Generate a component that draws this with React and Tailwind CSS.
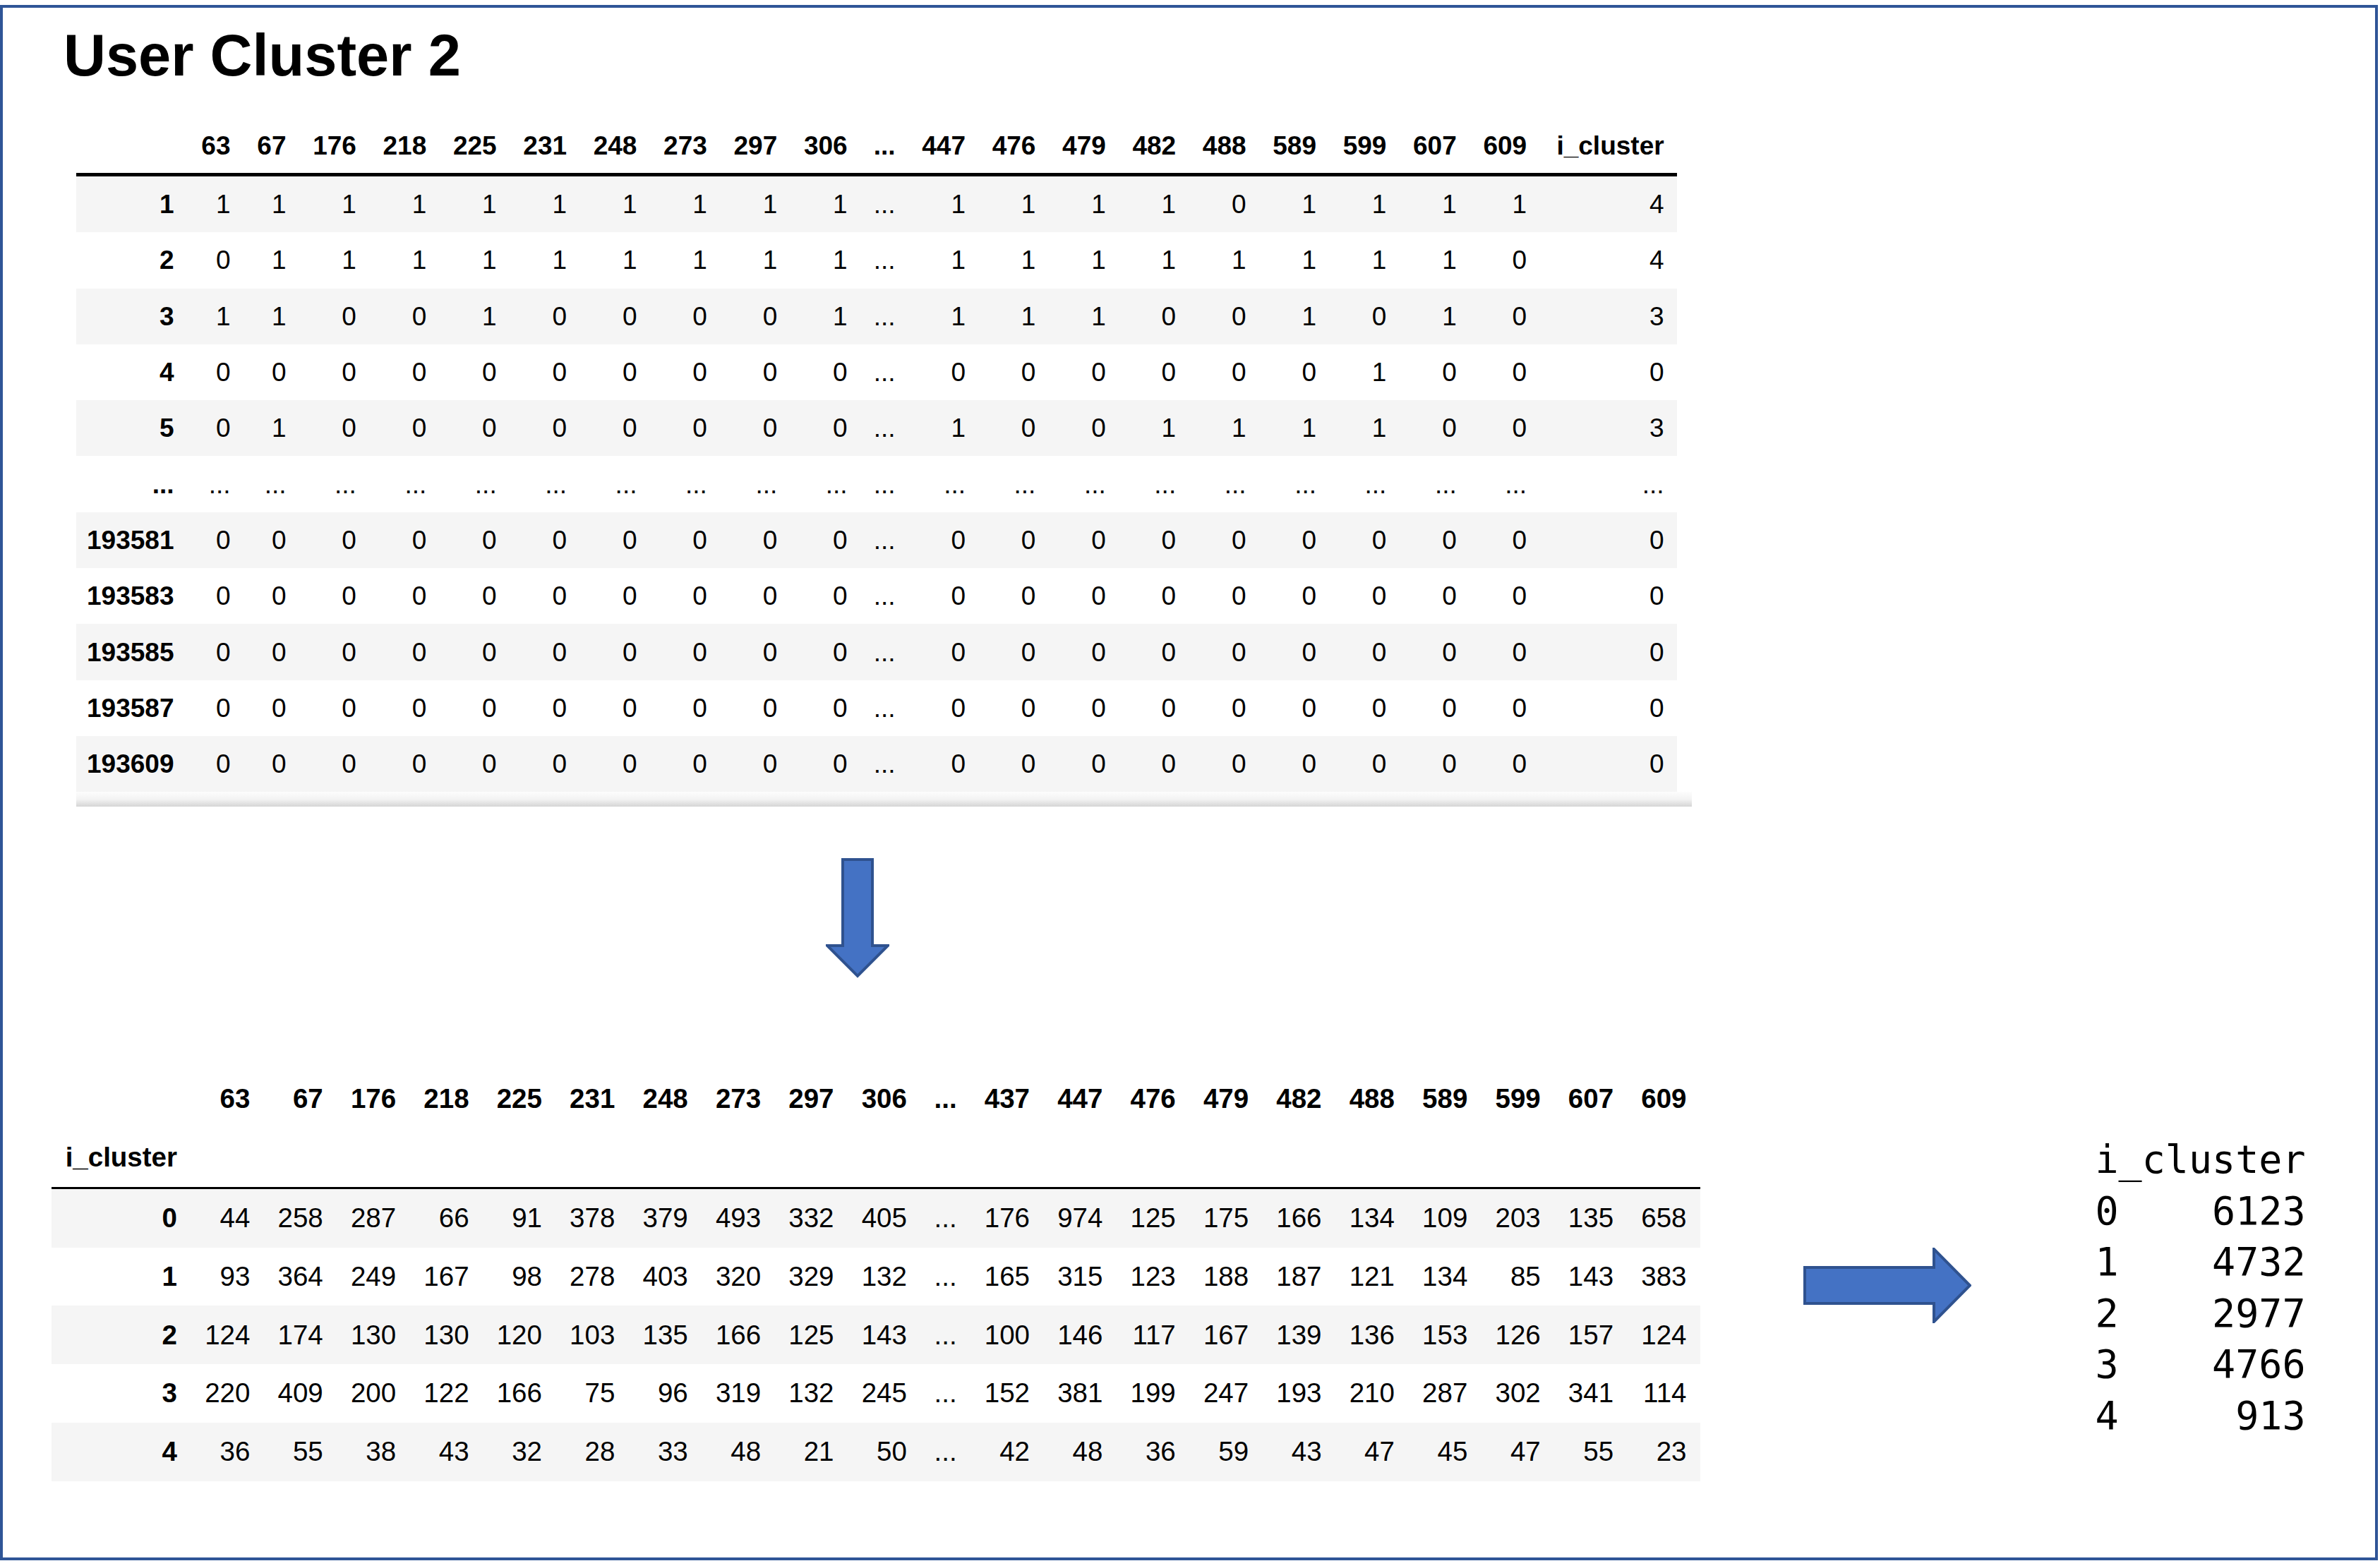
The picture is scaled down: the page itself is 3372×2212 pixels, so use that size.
const T1 = "grid w-max grid-cols-[157px_80px_79px_repeat(8,99.4px)_68px_repeat(9,99.4px)_194.5px]";
const T2 = "grid w-max grid-cols-[197px_repeat(10,103.4px)_70.7px_repeat(10,103.4px)]";

const H1 = "63 67 176 218 225 231 248 273 297 306 ... 447 476 479 482 488 589 599 607 609 i_cluster".split(" ");
const R1 = [
  "1 1 1 1 1 1 1 1 1 1 1 ... 1 1 1 1 0 1 1 1 1 4",
  "2 0 1 1 1 1 1 1 1 1 1 ... 1 1 1 1 1 1 1 1 0 4",
  "3 1 1 0 0 1 0 0 0 0 1 ... 1 1 1 0 0 1 0 1 0 3",
  "4 0 0 0 0 0 0 0 0 0 0 ... 0 0 0 0 0 0 1 0 0 0",
  "5 0 1 0 0 0 0 0 0 0 0 ... 1 0 0 1 1 1 1 0 0 3",
  "... ... ... ... ... ... ... ... ... ... ... ... ... ... ... ... ... ... ... ... ... ...",
  "193581 0 0 0 0 0 0 0 0 0 0 ... 0 0 0 0 0 0 0 0 0 0",
  "193583 0 0 0 0 0 0 0 0 0 0 ... 0 0 0 0 0 0 0 0 0 0",
  "193585 0 0 0 0 0 0 0 0 0 0 ... 0 0 0 0 0 0 0 0 0 0",
  "193587 0 0 0 0 0 0 0 0 0 0 ... 0 0 0 0 0 0 0 0 0 0",
  "193609 0 0 0 0 0 0 0 0 0 0 ... 0 0 0 0 0 0 0 0 0 0",
].map((r) => r.split(" "));

const H2 = "63 67 176 218 225 231 248 273 297 306 ... 437 447 476 479 482 488 589 599 607 609".split(" ");
const R2 = [
  "0 44 258 287 66 91 378 379 493 332 405 ... 176 974 125 175 166 134 109 203 135 658",
  "1 93 364 249 167 98 278 403 320 329 132 ... 165 315 123 188 187 121 134 85 143 383",
  "2 124 174 130 130 120 103 135 166 125 143 ... 100 146 117 167 139 136 153 126 157 124",
  "3 220 409 200 122 166 75 96 319 132 245 ... 152 381 199 247 193 210 287 302 341 114",
  "4 36 55 38 43 32 28 33 48 21 50 ... 42 48 36 59 43 47 45 47 55 23",
].map((r) => r.split(" "));

function Cell1({ children, bold }) {
  return (
    <div className={`flex items-center justify-end pr-[18.5px] whitespace-nowrap ${bold ? "font-bold" : "font-normal"}`}>
      {children}
    </div>
  );
}

function Cell2({ children, bold }) {
  return (
    <div className={`flex items-center justify-end pr-[19px] whitespace-nowrap ${bold ? "font-bold" : "font-normal"}`}>
      {children}
    </div>
  );
}

function DownArrow() {
  return (
    <svg className="ml-[1166px] mt-[73px] block" width="90" height="170" viewBox="0 0 90 170">
      <polygon
        points="24,2 66,2 66,124 88,124 45,167 2,124 24,124"
        fill="#4472C4"
        stroke="#2F528F"
        strokeWidth="4"
        strokeLinejoin="miter"
      />
    </svg>
  );
}

function RightArrow() {
  return (
    <svg className="ml-[146px] mt-[252px] block shrink-0" width="238" height="107" viewBox="0 0 238 107">
      <polygon
        points="2,28 185,28 185,2 236,53.5 185,105 185,79 2,79"
        fill="#4472C4"
        stroke="#2F528F"
        strokeWidth="4"
        strokeLinejoin="miter"
      />
    </svg>
  );
}

export default function App() {
  return (
    <div className="w-[3372px] h-[2212px] bg-white pt-[7px] text-black font-['Liberation_Sans',Arial,sans-serif]">
      <div className="w-[3369px] h-[2204px] border-4 border-[#2F5597] flex flex-col">
        <h1 className="ml-[86px] mt-[26px] text-[83px] leading-none font-bold">User Cluster 2</h1>

        <div className="ml-[104px] mt-[47px] flex flex-col items-start w-max text-[37px] leading-none">
          <div className={`${T1} h-[83px] border-b-[5px] border-black`}>
            <div />
            {H1.map((h, i) => (
              <Cell1 key={i} bold>
                {h}
              </Cell1>
            ))}
          </div>
          {R1.map((row, ri) => (
            <div key={ri} className={`${T1} h-[79.3px] ${ri % 2 === 0 ? "bg-[#f5f5f5]" : "bg-white"}`}>
              {row.map((v, ci) => (
                <Cell1 key={ci} bold={ci === 0}>
                  {v}
                </Cell1>
              ))}
            </div>
          ))}
          <div className="w-[2289px] h-[21px] bg-linear-to-b from-[#fdfdfd] via-[#f3f3f3] to-[#d5d5d5]" />
        </div>

        <DownArrow />

        <div className="mt-[130px] flex items-start">
          <div className="ml-[69px] flex flex-col items-start w-max text-[38.5px] leading-none shrink-0">
            <div className={`${T2} h-[82.8px]`}>
              <div />
              {H2.map((h, i) => (
                <Cell2 key={i} bold>
                  {h}
                </Cell2>
              ))}
            </div>
            <div className={`${T2} h-[85.8px] border-b-[3px] border-black`}>
              <Cell2 bold>i_cluster</Cell2>
            </div>
            {R2.map((row, ri) => (
              <div key={ri} className={`${T2} h-[82.8px] ${ri % 2 === 0 ? "bg-[#f5f5f5]" : "bg-white"}`}>
                {row.map((v, ci) => (
                  <Cell2 key={ci} bold={ci === 0}>
                    {v}
                  </Cell2>
                ))}
              </div>
            ))}
          </div>

          <RightArrow />

          <pre className="ml-[176px] mt-[91px] text-[55px] leading-[72.5px] font-['DejaVu_Sans_Mono','Liberation_Mono',monospace] text-black whitespace-pre">
{`i_cluster
0    6123
1    4732
2    2977
3    4766
4     913`}
          </pre>
        </div>
      </div>
    </div>
  );
}
